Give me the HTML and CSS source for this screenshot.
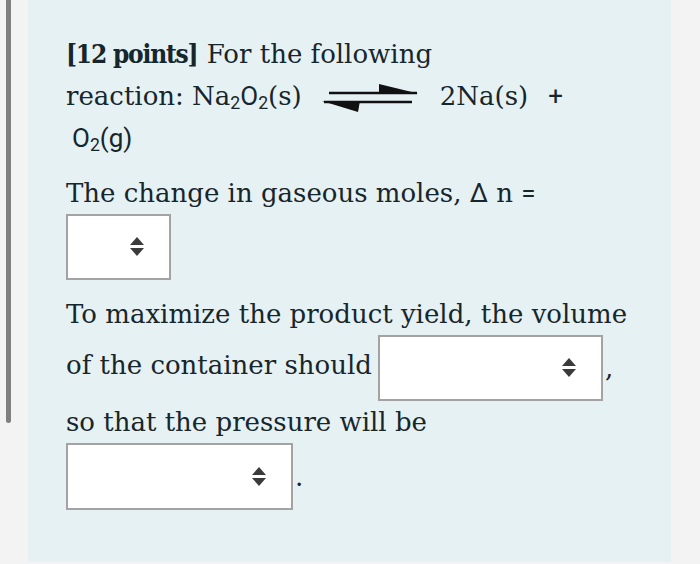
FILE: index.html
```html
<!DOCTYPE html>
<html>
<head>
<meta charset="utf-8">
<link rel="stylesheet" href="styles.css">
</head>
<body>
<div class="page">
  <div class="gutter"><div class="bar"></div></div>
  <div class="panel">
    <p class="line-block"><b>[12 points]</b> For the following<br>reaction: Na<span class="sans"><sub>2</sub>O<sub>2</sub></span>(s)<svg class="eq" width="96" height="32" viewBox="0 0 96 32"><path d="M7 11 H95 M2 20 H90" stroke="#111" stroke-width="2.4" fill="none"/><path d="M57 2 L96 11.5 L57 12 Z" fill="#111"/><path d="M0 19 L38 19 L36 30 Z" fill="#111"/></svg>2Na(s)<span class="plus">+</span><br><span class="sans o2">O<sub>2</sub>(g)</span></p>
    <p class="line moles">The change in gaseous moles, <span class="sans">Δ</span> n <span class="sans">=</span></p>
    <div class="row"><div class="select small"><span class="updown"></span></div></div>
    <p class="line maximize">To maximize the product yield, the volume</p>
    <div class="row inline"><span class="line shift">of the container should</span><div class="select wide"><span class="updown"></span></div><span class="punct">,</span></div>
    <p class="line">so that the pressure will be</p>
    <div class="row inline"><div class="select wide2"><span class="updown"></span></div><span class="punct dot">.</span></div>
  </div>
</div>
</body>
</html>
```
FILE: styles.css
```css
html, body {
  margin: 0;
  padding: 0;
  background: #f3f3f3;
}
.page {
  display: flex;
  width: 700px;
  height: 564px;
}
.gutter {
  width: 28px;
  flex: none;
}
.bar {
  margin-left: 6px;
  width: 5px;
  height: 423px;
  background: #7f7f7f;
  border-radius: 0 0 3px 3px;
}
.panel {
  width: 643px;
  height: 562px;
  background: #e6f1f4;
  padding: 33px 0 0 38px;
  box-sizing: border-box;
  font-family: "DejaVu Serif", serif;
  font-size: 26px;
  color: #17262b;
}
p { margin: 0; }
.line-block, .line {
  line-height: 42px;
  white-space: nowrap;
}
.line-block b {
  font-family: "DejaVu Serif Condensed", "DejaVu Serif", serif;
  font-weight: bold;
  letter-spacing: -1.2px;
  margin-right: 1px;
}
.sans { font-family: Roboto, "Noto Sans", sans-serif; }
sub {
  font-size: 0.68em;
  vertical-align: -0.25em;
  line-height: 0;
}
.eq {
  vertical-align: -9px;
  margin: 0 22px 0 20px;
}
.plus {
  font-family: Roboto, sans-serif;
  margin-left: 20px;
}
.o2 { margin-left: 6px; }
.moles { margin-top: 13px; }
.maximize { margin-top: 13px; }
.row { display: flex; }
.row.inline { align-items: center; }
.shift { padding-bottom: 6px; margin-right: 6px; }
.select {
  position: relative;
  height: 66px;
  background: #fff;
  border: 2px solid #a3a3a3;
  box-sizing: border-box;
}
.small { width: 105px; }
.wide { width: 225px; }
.wide2 { width: 227px; height: 67px; }
.updown {
  position: absolute;
  right: 25px;
  top: 50%;
  width: 14px;
  height: 19px;
  margin-top: -10px;
}
.updown::before, .updown::after {
  content: "";
  position: absolute;
  left: 0;
  border-left: 7px solid transparent;
  border-right: 7px solid transparent;
}
.updown::before {
  top: 0;
  border-bottom: 8px solid #3b3b3b;
}
.updown::after {
  bottom: 0;
  border-top: 8px solid #3b3b3b;
}
.punct {
  margin-left: 2px;
  align-self: center;
}
.dot { margin-left: 2px; }
```
